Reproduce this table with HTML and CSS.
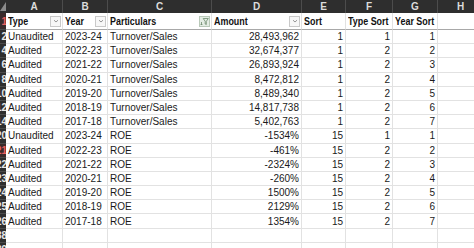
FILE: index.html
```html
<!DOCTYPE html>
<html>
<head>
<meta charset="utf-8">
<link rel="stylesheet" href="styles.css">
</head>
<body>
<div class="sheet">
  <div class="row colhdr">
    <div class="rh corner"><svg width="6" height="12" viewBox="0 0 6 12"><polygon points="0,11 6,11 6,2" fill="#8a8a8a"/></svg></div>
    <div class="ch">A</div><div class="ch">B</div><div class="ch">C</div><div class="ch">D</div><div class="ch">E</div><div class="ch">F</div><div class="ch">G</div><div class="ch">H</div>
  </div>
  <div class="row hdr">
    <div class="rh sel"><span>1</span></div>
    <div class="c th"><span class="lbl">Type</span><i class="fb"><svg width="8" height="8" viewBox="0 0 8 8"><path d="M2 3.2 L4 5 L6 3.2" fill="none" stroke="#8a8a8a" stroke-width="0.9"/></svg></i></div>
    <div class="c th"><span class="lbl">Year</span><i class="fb"><svg width="8" height="8" viewBox="0 0 8 8"><path d="M2 3.2 L4 5 L6 3.2" fill="none" stroke="#8a8a8a" stroke-width="0.9"/></svg></i></div>
    <div class="c th"><span class="lbl">Particulars</span><i class="fb on"><svg width="9" height="9" viewBox="0 0 9 9"><path d="M1.5 5 L1.5 8 M0.6 7 L1.5 8 L2.4 7" fill="none" stroke="#6d8a6d" stroke-width="0.8"/><path d="M3.2 1.5 H8.3 L6.3 4.3 V7.6 L5.2 7 V4.3 Z" fill="none" stroke="#6d8a6d" stroke-width="0.8"/></svg></i></div>
    <div class="c th"><span class="lbl">Amount</span><i class="fb"><svg width="8" height="8" viewBox="0 0 8 8"><path d="M2 3.2 L4 5 L6 3.2" fill="none" stroke="#8a8a8a" stroke-width="0.9"/></svg></i></div>
    <div class="c th"><span class="lbl">Sort</span></div>
    <div class="c th"><span class="lbl">Type Sort</span></div>
    <div class="c th"><span class="lbl">Year Sort</span></div>
    <div class="c th"></div>
  </div>
  <div class="row"><div class="rh"><span>2</span></div><div class="c">Unaudited</div><div class="c">2023-24</div><div class="c">Turnover/Sales</div><div class="c n">28,493,962</div><div class="c n">1</div><div class="c n">1</div><div class="c n">1</div><div class="c"></div></div>
  <div class="row"><div class="rh"><span>4</span></div><div class="c">Audited</div><div class="c">2022-23</div><div class="c">Turnover/Sales</div><div class="c n">32,674,377</div><div class="c n">1</div><div class="c n">2</div><div class="c n">2</div><div class="c"></div></div>
  <div class="row"><div class="rh"><span>6</span></div><div class="c">Audited</div><div class="c">2021-22</div><div class="c">Turnover/Sales</div><div class="c n">26,893,924</div><div class="c n">1</div><div class="c n">2</div><div class="c n">3</div><div class="c"></div></div>
  <div class="row"><div class="rh"><span>8</span></div><div class="c">Audited</div><div class="c">2020-21</div><div class="c">Turnover/Sales</div><div class="c n">8,472,812</div><div class="c n">1</div><div class="c n">2</div><div class="c n">4</div><div class="c"></div></div>
  <div class="row"><div class="rh"><span>10</span></div><div class="c">Audited</div><div class="c">2019-20</div><div class="c">Turnover/Sales</div><div class="c n">8,489,340</div><div class="c n">1</div><div class="c n">2</div><div class="c n">5</div><div class="c"></div></div>
  <div class="row"><div class="rh"><span>12</span></div><div class="c">Audited</div><div class="c">2018-19</div><div class="c">Turnover/Sales</div><div class="c n">14,817,738</div><div class="c n">1</div><div class="c n">2</div><div class="c n">6</div><div class="c"></div></div>
  <div class="row"><div class="rh"><span>14</span></div><div class="c">Audited</div><div class="c">2017-18</div><div class="c">Turnover/Sales</div><div class="c n">5,402,763</div><div class="c n">1</div><div class="c n">2</div><div class="c n">7</div><div class="c"></div></div>
  <div class="row"><div class="rh"><span>20</span></div><div class="c">Unaudited</div><div class="c">2023-24</div><div class="c">ROE</div><div class="c n">-1534%</div><div class="c n">15</div><div class="c n">1</div><div class="c n">1</div><div class="c"></div></div>
  <div class="row"><div class="rh sel"><span>21</span></div><div class="c">Audited</div><div class="c">2022-23</div><div class="c">ROE</div><div class="c n">-461%</div><div class="c n">15</div><div class="c n">2</div><div class="c n">2</div><div class="c"></div></div>
  <div class="row"><div class="rh"><span>22</span></div><div class="c">Audited</div><div class="c">2021-22</div><div class="c">ROE</div><div class="c n">-2324%</div><div class="c n">15</div><div class="c n">2</div><div class="c n">3</div><div class="c"></div></div>
  <div class="row"><div class="rh"><span>23</span></div><div class="c">Audited</div><div class="c">2020-21</div><div class="c">ROE</div><div class="c n">-260%</div><div class="c n">15</div><div class="c n">2</div><div class="c n">4</div><div class="c"></div></div>
  <div class="row"><div class="rh"><span>24</span></div><div class="c">Audited</div><div class="c">2019-20</div><div class="c">ROE</div><div class="c n">1500%</div><div class="c n">15</div><div class="c n">2</div><div class="c n">5</div><div class="c"></div></div>
  <div class="row"><div class="rh"><span>25</span></div><div class="c">Audited</div><div class="c">2018-19</div><div class="c">ROE</div><div class="c n">2129%</div><div class="c n">15</div><div class="c n">2</div><div class="c n">6</div><div class="c"></div></div>
  <div class="row"><div class="rh"><span>26</span></div><div class="c">Audited</div><div class="c">2017-18</div><div class="c">ROE</div><div class="c n">1354%</div><div class="c n">15</div><div class="c n">2</div><div class="c n">7</div><div class="c"></div></div>
  <div class="row"><div class="rh"><span>38</span></div><div class="c"></div><div class="c"></div><div class="c"></div><div class="c"></div><div class="c"></div><div class="c"></div><div class="c"></div><div class="c"></div></div>
  <div class="row"><div class="rh"><span>39</span></div><div class="c"></div><div class="c"></div><div class="c"></div><div class="c"></div><div class="c"></div><div class="c"></div><div class="c"></div><div class="c"></div></div>
</div>
</body>
</html>
```

FILE: styles.css
```css
html, body {
  margin: 0;
  padding: 0;
  background: #ffffff;
  overflow: hidden;
}
.sheet {
  display: flex;
  flex-direction: column;
  width: 474px;
  height: 248px;
  overflow: hidden;
  font-family: "Liberation Sans", Arial, sans-serif;
  font-size: 10px;
  color: #1a1a1a;
}
.row {
  display: grid;
  grid-template-columns: 6px 57px 45px 104px 90px 44px 47px 45px 46px;
  height: 14.2px;
  flex: none;
}
.colhdr {
  height: 13px;
  background: #2e2e2e;
}
.hdr {
  height: 17px;
}
.rh {
  background: #2e2e2e;
  display: flex;
  justify-content: flex-end;
  align-items: center;
  overflow: hidden;
  color: #e8e8e8;
  font-weight: bold;
  font-size: 10px;
  border-bottom: 1px solid #4a4a4a;
  box-sizing: border-box;
}
.rh span {
  white-space: nowrap;
  margin-right: -1px;
}
.rh.sel {
  background: #3a2a2a;
  color: #e86060;
}
.corner {
  border-bottom: none;
  align-items: flex-start;
}
.ch {
  display: flex;
  align-items: center;
  justify-content: center;
  color: #dcdcdc;
  font-weight: bold;
  font-size: 10px;
  border-right: 1px solid #4c4c4c;
  box-sizing: border-box;
}
.c {
  border-right: 1px solid #e2e2e2;
  border-bottom: 1px solid #e2e2e2;
  box-sizing: border-box;
  display: flex;
  align-items: center;
  padding: 0 2px;
  white-space: nowrap;
  overflow: hidden;
}
.n {
  justify-content: flex-end;
}
.th {
  font-weight: bold;
  font-size: 10.5px;
  color: #111;
  border-bottom: 1px solid #a8a8a8;
  justify-content: space-between;
  padding-right: 1px;
  position: relative;
}
.lbl {
  display: inline-block;
  width: 0;
  overflow: visible;
  transform: scaleX(0.85);
  transform-origin: left center;
}
.fb {
  width: 9px;
  height: 9px;
  border: 1px solid #c9c9c9;
  background: #f7f7f7;
  display: flex;
  align-items: center;
  justify-content: center;
  flex: none;
}
.fb.on {
  background: #e4ede4;
  border-color: #b9c9b9;
}
```
